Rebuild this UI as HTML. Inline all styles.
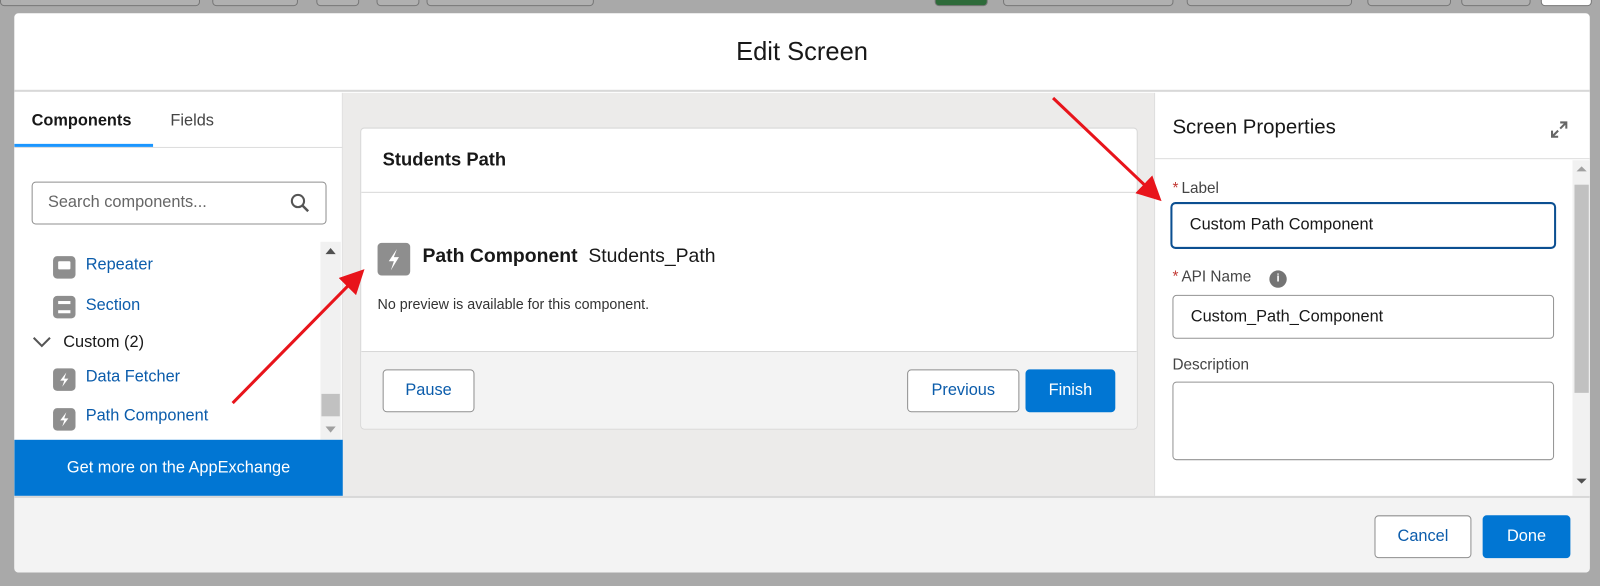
<!DOCTYPE html>
<html><head><meta charset="utf-8"><style>
*{box-sizing:border-box;margin:0;padding:0}
body{width:1600px;height:574px;background:#a9a9a9;font-family:"Liberation Sans",sans-serif;position:relative;overflow:hidden;color:#181818}
#w{position:absolute;left:0;top:0;width:1568px;height:563px;transform:scale(1.0204);transform-origin:0 0}
.a{position:absolute}
.tb{position:absolute;top:-6px;height:12px;border:1px solid #777;border-radius:4px;background:#b0b0b0}
.modal{left:14px;top:13px;width:1544px;height:548px;background:#fff;border-radius:4px;overflow:hidden}
.btn{position:absolute;border:1px solid #8f8f8f;border-radius:4px;background:#fff;color:#0b5cab;font-size:16px;display:flex;align-items:center;justify-content:center}
.blue{background:#0176d3;border-color:#0176d3;color:#fff}
.ic{position:absolute;width:22px;height:22px;border-radius:4px;background:#8e8e8e}
.lnk{position:absolute;color:#0b5cab;font-size:16px}
.inp{position:absolute;border:1px solid #939393;border-radius:4px;font-size:16px;padding-left:17px;display:flex;align-items:center}
.lbl{position:absolute;font-size:15px;color:#444}
.lbl b{color:#c23934;font-weight:normal;margin-right:3px}
</style></head><body><div id="w">
<div class="tb" style="left:0;width:196px"></div>
<div class="tb" style="left:208px;width:84px"></div>
<div class="tb" style="left:310px;width:42px"></div>
<div class="tb" style="left:369px;width:42px"></div>
<div class="tb" style="left:418px;width:164px"></div>
<div class="tb" style="left:916px;width:52px;background:#2e6b3a"></div>
<div class="tb" style="left:983px;width:167px"></div>
<div class="tb" style="left:1163px;width:162px"></div>
<div class="tb" style="left:1340px;width:82px"></div>
<div class="tb" style="left:1432px;width:68px"></div>
<div class="tb" style="left:1510px;width:50px;background:#fff"></div>

<div class="a modal">
 <div class="a" style="left:0;top:0;width:1544px;height:77px;border-bottom:2px solid #d8d8d8;text-align:center;font-size:25px;line-height:77px">Edit Screen</div>
 <div class="a" style="left:0;top:78px;width:322px;height:395px;background:#fff;border-right:1px solid #ddd">
  <div class="a" style="left:17px;top:19px;font-size:16px;font-weight:bold">Components</div>
  <div class="a" style="left:153px;top:19px;font-size:16px;color:#444">Fields</div>
  <div class="a" style="left:0;top:50px;width:136px;height:3px;background:#1b96ff"></div>
  <div class="a" style="left:0;top:53px;width:322px;height:1px;background:#ddd"></div>
  <div class="a" style="left:17px;top:87px;width:289px;height:42px;border:1px solid #8f8f8f;border-radius:4px;font-size:16px;color:#666;padding:11px 15px">Search components...</div>
  <svg class="a" style="left:270px;top:98px" width="20" height="20"><circle cx="8" cy="8" r="6" fill="none" stroke="#555" stroke-width="2"/><line x1="12.5" y1="12.5" x2="18" y2="18" stroke="#555" stroke-width="2.4"/></svg>
  <div class="ic" style="left:38px;top:160px"></div><div class="a" style="left:43px;top:165px;width:12px;height:8px;background:#fff;border-radius:1px"></div>
  <div class="lnk" style="left:70px;top:160px">Repeater</div>
  <div class="ic" style="left:38px;top:199px"></div><div class="a" style="left:43px;top:204px;width:12px;height:12px;border-top:3px solid #fff;border-bottom:3px solid #fff"></div>
  <div class="lnk" style="left:70px;top:200px">Section</div>
  <svg class="a" style="left:18px;top:238px" width="18" height="12"><polyline points="1,2 9,10 17,2" fill="none" stroke="#555" stroke-width="2"/></svg>
  <div class="a" style="left:48px;top:236px;font-size:16px">Custom (2)</div>
  <div class="ic" style="left:38px;top:270px"></div><svg class="a" style="left:38px;top:270px" width="22" height="22"><path d="M13 4 L7 12 L11 12 L9 18 L15 10 L11 10 Z" fill="#fff"/></svg>
  <div class="lnk" style="left:70px;top:270px">Data Fetcher</div>
  <div class="ic" style="left:38px;top:309px"></div><svg class="a" style="left:38px;top:309px" width="22" height="22"><path d="M13 4 L7 12 L11 12 L9 18 L15 10 L11 10 Z" fill="#fff"/></svg>
  <div class="lnk" style="left:70px;top:308px">Path Component</div>
  <div class="a" style="left:300px;top:146px;width:20px;height:194px;background:#f1f1f1"></div>
  <div class="a" style="left:305px;top:152px;border:5px solid transparent;border-bottom:6px solid #505050;border-top:0"></div>
  <div class="a" style="left:301px;top:295px;width:18px;height:22px;background:#c1c1c1"></div>
  <div class="a" style="left:305px;top:327px;border:5px solid transparent;border-top:6px solid #a0a0a0;border-bottom:0"></div>
  <div class="a" style="left:0;top:340px;width:322px;height:55px;background:#0176d3;color:#fff;font-size:16px;text-align:center;line-height:55px">Get more on the AppExchange</div>
 </div>
 <div class="a" style="left:322px;top:78px;width:795px;height:395px;background:#ecebea">
  <div class="a" style="left:17px;top:34px;width:762px;height:296px;background:#fff;border:1px solid #d8d8d8;border-radius:4px;overflow:hidden">
   <div class="a" style="left:21px;top:20px;font-size:18px;font-weight:bold">Students Path</div>
   <div class="a" style="left:0;top:62px;width:762px;height:1px;background:#d8d8d8"></div>
   <div class="ic" style="left:16px;top:112px;width:32px;height:32px;border-radius:4px"></div>
   <svg class="a" style="left:16px;top:112px" width="32" height="32"><path d="M19 6 L11 18 L16 18 L13 27 L21 14 L16 14 Z" fill="#fff"/></svg>
   <div class="a" style="left:60px;top:115px;font-size:19px"><b>Path Component</b>&nbsp; Students_Path</div>
   <div class="a" style="left:16px;top:164px;font-size:14px;color:#333">No preview is available for this component.</div>
   <div class="a" style="left:0;top:218px;width:762px;height:78px;background:#f3f3f3;border-top:1px solid #d8d8d8"></div>
   <div class="btn" style="left:21px;top:236px;width:90px;height:42px">Pause</div>
   <div class="btn" style="left:535px;top:236px;width:110px;height:42px">Previous</div>
   <div class="btn blue" style="left:651px;top:236px;width:88px;height:42px">Finish</div>
  </div>
 </div>
 <div class="a" style="left:1117px;top:78px;width:427px;height:395px;background:#fff;border-left:1px solid #ddd">
  <div class="a" style="left:17px;top:23px;font-size:20px">Screen Properties</div>
  <svg class="a" style="left:386px;top:26px" width="20" height="20"><path d="M11 3 H17 V9 M17 3 L11 9 M9 17 H3 V11 M3 17 L9 11" fill="none" stroke="#666" stroke-width="2"/></svg>
  <div class="a" style="left:0;top:64px;width:427px;height:1px;background:#ddd"></div>
  <div class="a" style="left:409px;top:66px;width:18px;height:329px;background:#f1f1f1"></div>
  <div class="a" style="left:411px;top:90px;width:14px;height:204px;background:#c1c1c1"></div>
  <div class="a" style="left:413px;top:72px;border:5px solid transparent;border-bottom:5px solid #a0a0a0;border-top:0"></div>
  <div class="a" style="left:413px;top:378px;border:5px solid transparent;border-top:5px solid #505050;border-bottom:0"></div>
  <div class="lbl" style="left:17px;top:85px"><b>*</b>Label</div>
  <div class="inp" style="left:15px;top:107px;width:378px;height:46px;border:2px solid #0b4f91;border-radius:5px">Custom Path Component</div>
  <div class="lbl" style="left:17px;top:172px"><b>*</b>API Name</div>
  <div class="a" style="left:112px;top:174px;width:17px;height:17px;border-radius:50%;background:#747474;color:#fff;font-size:11px;font-weight:bold;text-align:center;line-height:17px">i</div>
  <div class="inp" style="left:17px;top:198px;width:374px;height:43px">Custom_Path_Component</div>
  <div class="lbl" style="left:17px;top:258px">Description</div>
  <div class="inp" style="left:17px;top:283px;width:374px;height:77px"></div>
 </div>
 <div class="a" style="left:0;top:473px;width:1544px;height:75px;background:#f3f3f3;border-top:2px solid #d8d8d8">
  <div class="btn" style="left:1333px;top:17px;width:95px;height:42px">Cancel</div>
  <div class="btn blue" style="left:1439px;top:17px;width:86px;height:42px">Done</div>
 </div>
</div>
<svg class="a" style="left:0;top:0" width="1600" height="574">
 <defs><marker id="ar" markerWidth="8" markerHeight="8" refX="6" refY="4" orient="auto"><path d="M0,0 L8,4 L0,8 Z" fill="#e8141b"/></marker></defs>
 <line x1="228" y1="395" x2="353" y2="268" stroke="#e8141b" stroke-width="3" marker-end="url(#ar)"/>
 <line x1="1032" y1="96" x2="1134" y2="193" stroke="#e8141b" stroke-width="3" marker-end="url(#ar)"/>
</svg>
</div></body></html>
